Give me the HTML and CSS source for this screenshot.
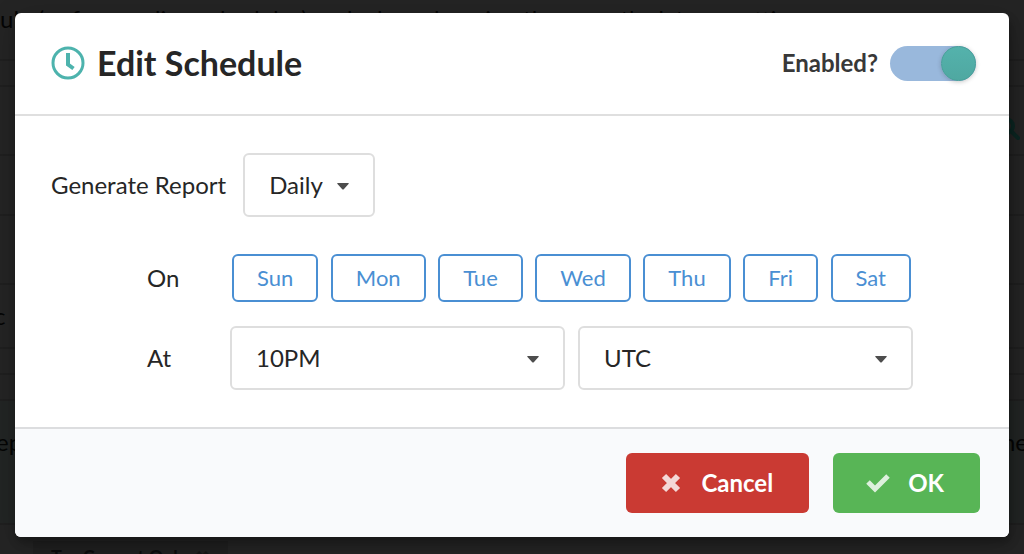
FILE: index.html
```
<!DOCTYPE html>
<html lang="en">
<head>
<meta charset="utf-8">
<meta name="viewport" content="width=device-width, initial-scale=1">
<title>Edit Schedule</title>
<link rel="stylesheet" href="styles.css">
</head>
<body>
<div class="page" aria-hidden="true">
  <div class="page-row row-intro">ule (or for pending schedules) and when changing the report's date or settings</div>
  <div class="page-row row-thin"></div>
  <div class="page-row row-search">
    <svg class="search-icon" viewBox="0 0 24 24"><circle cx="10" cy="10" r="7"/><path d="M15 15l7 7"/></svg>
  </div>
  <div class="page-row row-short"></div>
  <div class="page-row row-medium"></div>
  <div class="page-row row-name">c</div>
  <div class="page-row row-thin"></div>
  <div class="page-row row-thin"></div>
  <div class="page-row row-report"><span>ep</span><span>ne</span></div>
  <div class="page-tags"><span class="tag">Tag Current Only <b>✖</b></span></div>
</div>
<main class="dimmer">
  <form class="modal" role="dialog" aria-labelledby="modal-title">
    <header class="modal-header">
      <h1 class="modal-title" id="modal-title">
        <svg class="clock-icon" viewBox="0 0 34 34" aria-hidden="true">
          <circle cx="17" cy="17" r="15"/>
          <path d="M17 7V18.500L22.500 22.500"/>
        </svg>
        Edit Schedule
      </h1>
      <label class="enabled">Enabled?
        <input class="switch" type="checkbox" role="switch" checked>
      </label>
    </header>
    <div class="modal-body">
      <div class="frequency">
        <label for="frequency">Generate Report</label>
        <div class="select">
          <select id="frequency"><option>Daily</option></select>
          <svg class="caret" viewBox="0 0 12 7" aria-hidden="true"><path d="M1 0H11Q12.500 0 11.500 1L7 6Q6 7 5 6L.5 1Q-.5 0 1 0Z"/></svg>
        </div>
      </div>
      <div class="row">
        <span class="row-label" id="days-label">On</span>
        <div class="days" role="group" aria-labelledby="days-label">
          <button class="day" type="button">Sun</button>
          <button class="day" type="button">Mon</button>
          <button class="day" type="button">Tue</button>
          <button class="day" type="button">Wed</button>
          <button class="day" type="button">Thu</button>
          <button class="day" type="button">Fri</button>
          <button class="day" type="button">Sat</button>
        </div>
      </div>
      <div class="row">
        <label class="row-label" for="time">At</label>
        <div class="times">
          <div class="select">
            <select id="time"><option>10PM</option></select>
            <svg class="caret" viewBox="0 0 12 7" aria-hidden="true"><path d="M1 0H11Q12.500 0 11.500 1L7 6Q6 7 5 6L.5 1Q-.5 0 1 0Z"/></svg>
          </div>
          <div class="select">
            <select aria-label="Time zone"><option>UTC</option></select>
            <svg class="caret" viewBox="0 0 12 7" aria-hidden="true"><path d="M1 0H11Q12.500 0 11.500 1L7 6Q6 7 5 6L.5 1Q-.5 0 1 0Z"/></svg>
          </div>
        </div>
      </div>
    </div>
    <footer class="modal-footer">
      <button class="action cancel" type="button">
        <svg viewBox="0 0 24 24" aria-hidden="true"><path d="M5 5L19 19M19 5L5 19" stroke-width="6"/></svg>
        Cancel
      </button>
      <button class="action ok" type="submit">
        <svg viewBox="0 0 24 24" aria-hidden="true"><path d="M2 11L9 18L22 5" stroke-width="5"/></svg>
        OK
      </button>
    </footer>
  </form>
</main>
</body>
</html>
```
FILE: styles.css
```
*,
*::before {
  box-sizing: border-box;
}

body {
  margin: 0;
  min-height: 100vh;
  overflow: hidden;
  background: #242424;
  color: #262626;
  font: 24px/32px Lato, "Liberation Sans", sans-serif;
}

/* Dimmed page behind the dialog */
.page {
  position: absolute;
  inset: 0;
  overflow: hidden;
  color: #050505;
}

.page-row {
  border-bottom: 2px solid #1f1f1f;
}

.row-intro {
  height: 61px;
  padding-top: 3px;
  white-space: nowrap;
}

.row-thin {
  height: 26px;
}

.row-search {
  height: 69px;
  display: flex;
  align-items: center;
  justify-content: flex-end;
  padding-right: 4px;
  padding-top: 14px;
}

.search-icon {
  width: 24px;
  height: 24px;
  fill: none;
  stroke: #0b2622;
  stroke-width: 4;
  stroke-linecap: round;
}

.row-short {
  height: 60px;
}

.row-medium {
  height: 69px;
}

.row-name {
  height: 64px;
  padding-top: 15px;
  margin-left: -6px;
}

.row-report {
  height: 124px;
  display: flex;
  justify-content: space-between;
  padding-top: 25px;
  margin: 0 -4px;
  background: #222524;
}

.page-tags {
  padding: 14px 33px;
}

.tag {
  display: inline-block;
  padding: 0 18px;
  background: #202020;
  color: #0c0c0c;
  font-size: 18px;
  font-weight: 700;
}

.tag b {
  margin-left: 4px;
  color: #151515;
}

/* Dialog */
.dimmer {
  position: relative;
  padding: 13px 15px 17px;
}

.modal {
  overflow: hidden;
  border-radius: 6px;
  background: #fff;
  box-shadow: 2px 6px 8px rgba(0, 0, 0, .25), 2px 6px 30px rgba(0, 0, 0, .2);
}

.modal-header {
  display: flex;
  align-items: center;
  justify-content: space-between;
  padding: 30px 33px 31px 36px;
  border-bottom: 2px solid #dfdfdf;
}

.modal-title {
  display: flex;
  align-items: center;
  gap: 12px;
  margin: 0;
  font-size: 34px;
  line-height: 40px;
}

.clock-icon {
  width: 34px;
  height: 34px;
  fill: none;
  stroke: #4db3ad;
  stroke-width: 3;
}

.clock-icon path {
  stroke-width: 4;
}

.enabled {
  display: flex;
  align-items: center;
  gap: 12px;
  color: #383838;
  font-weight: 700;
}

.switch {
  appearance: none;
  display: flex;
  width: 86px;
  height: 35px;
  margin: 0;
  border-radius: 18px;
  background: #99b8dc;
}

.switch::before {
  content: "";
  width: 35px;
  height: 35px;
  border: 1px solid #48a099;
  border-radius: 50%;
  background: linear-gradient(#54b2ac, #4fa8a1);
  box-shadow: 0 1px 4px rgba(34, 36, 38, .25);
}

.switch:checked {
  justify-content: flex-end;
}

.modal-body {
  display: flex;
  flex-direction: column;
  padding: 37px 96px 37px 36px;
}

.frequency {
  display: flex;
  align-items: center;
  gap: 17px;
  margin-bottom: 37px;
}

.select {
  display: grid;
  align-items: center;
}

.select select,
.select .caret {
  grid-area: 1 / 1;
}

.select select {
  appearance: none;
  width: 100%;
  height: 64px;
  padding: 0 50px 0 24px;
  border: 2px solid #dedede;
  border-radius: 6px;
  background: #fff;
  color: inherit;
  font: inherit;
}

.caret {
  justify-self: end;
  width: 12px;
  height: 7px;
  margin-right: 26px;
  margin-top: 2px;
  fill: #4d4d4d;
  pointer-events: none;
}

.row {
  display: grid;
  grid-template-columns: 83px 1fr;
  align-items: center;
  padding-left: 96px;
}

.row + .row {
  margin-top: 24px;
}

.days {
  display: flex;
  justify-content: space-between;
  padding: 0 2px;
}

.day {
  height: 48px;
  padding: 0 23px;
  border: 2px solid #4a8fd3;
  border-radius: 6px;
  background: #fff;
  color: #4a8fd3;
  font: inherit;
  font-size: 22px;
}

.times {
  display: grid;
  grid-template-columns: 1fr 1fr;
  gap: 13px;
}

.modal-footer {
  display: flex;
  justify-content: flex-end;
  gap: 24px;
  padding: 24px 29px;
  border-top: 2px solid #dcdddf;
  background: #f9fafc;
}

.action {
  display: flex;
  align-items: center;
  gap: 18px;
  height: 60px;
  padding: 0 36px 0 33px;
  border: 0;
  border-radius: 6px;
  color: #fff;
  font: inherit;
  font-weight: 700;
}

.action svg {
  width: 24px;
  height: 24px;
  fill: none;
  stroke: #fff;
  opacity: .8;
}

.cancel {
  background: #ca3a33;
}

.ok {
  background: #58b556;
}
```
